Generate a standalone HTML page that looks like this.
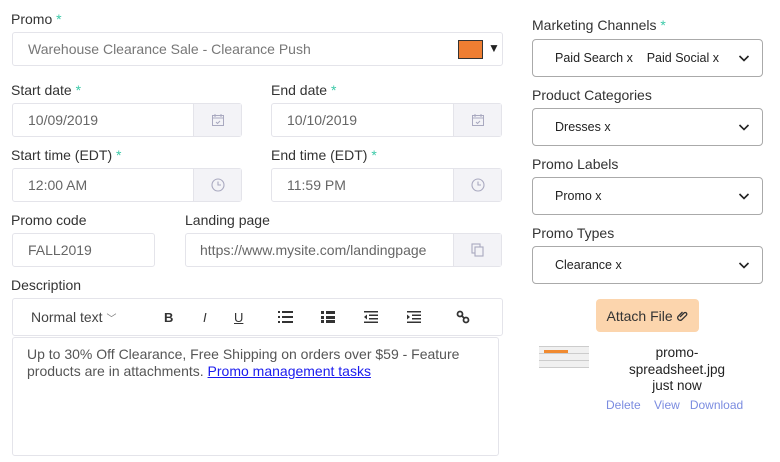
<!DOCTYPE html>
<html><head><style>
*{box-sizing:border-box;margin:0;padding:0}
body{width:780px;height:462px;background:#fff;font-family:"Liberation Sans",sans-serif;position:relative;overflow:hidden;color:#333}
.a{position:absolute}
.lbl{font-size:14px;color:#333;white-space:nowrap}
.st{color:#3cc9a8}
.in{border:1px solid #e4e4ea;border-radius:3px;background:#fff;font-size:14px;color:#666;display:flex;align-items:center;padding-left:15px}
.ad{position:absolute;right:0;top:0;bottom:0;width:48px;background:#f3f3f7;border-left:1px solid #e4e4ea;display:flex;align-items:center;justify-content:center}
.sel{border:1px solid #aaa;border-radius:4px;font-size:12.5px;color:#222;display:flex;align-items:center;padding-left:22px;white-space:nowrap}
.chev{position:absolute;right:12px;top:50%;margin-top:-6px}
.tb{font-size:14px;color:#444}
</style></head><body>
<div class="a lbl" style="left:11px;top:11px">Promo <span class="st">*</span></div>
<div class="a in" style="left:12px;top:32px;width:491px;height:34px;color:#777">Warehouse Clearance Sale - Clearance Push
<div class="a" style="left:445px;top:7px;width:25px;height:19px;background:#ef7e32;border:1px solid #333"></div>
<div class="a" style="left:475px;top:8px;font-size:12px;color:#222">▼</div></div>

<div class="a lbl" style="left:11px;top:82px">Start date <span class="st">*</span></div>
<div class="a in" style="left:12px;top:103px;width:230px;height:34px">10/09/2019<div class="ad"><svg width="14" height="14" viewBox="0 0 14 14" fill="none" stroke="#a9a9c0" stroke-width="1"><rect x="1.5" y="2.5" width="11" height="10"/><path d="M1.5 5h11M4 1v3M10 1v3M5 9l1.5 1.5L9 8"/></svg></div></div>
<div class="a lbl" style="left:271px;top:82px">End date <span class="st">*</span></div>
<div class="a in" style="left:271px;top:103px;width:231px;height:34px">10/10/2019<div class="ad"><svg width="14" height="14" viewBox="0 0 14 14" fill="none" stroke="#a9a9c0" stroke-width="1"><rect x="1.5" y="2.5" width="11" height="10"/><path d="M1.5 5h11M4 1v3M10 1v3M5 9l1.5 1.5L9 8"/></svg></div></div>

<div class="a lbl" style="left:11px;top:147px">Start time (EDT) <span class="st">*</span></div>
<div class="a in" style="left:12px;top:168px;width:230px;height:34px">12:00 AM<div class="ad"><svg width="14" height="14" viewBox="0 0 14 14" fill="none" stroke="#a9a9c0" stroke-width="1.1"><circle cx="7" cy="7" r="6"/><path d="M7 3.5V7h3"/></svg></div></div>
<div class="a lbl" style="left:271px;top:147px">End time (EDT) <span class="st">*</span></div>
<div class="a in" style="left:271px;top:168px;width:231px;height:34px">11:59 PM<div class="ad"><svg width="14" height="14" viewBox="0 0 14 14" fill="none" stroke="#a9a9c0" stroke-width="1.1"><circle cx="7" cy="7" r="6"/><path d="M7 3.5V7h3"/></svg></div></div>

<div class="a lbl" style="left:11px;top:212px">Promo code</div>
<div class="a in" style="left:12px;top:233px;width:143px;height:34px">FALL2019</div>
<div class="a lbl" style="left:185px;top:212px">Landing page</div>
<div class="a in" style="left:185px;top:233px;width:317px;height:34px;padding-left:14px">https://www.mysite.com/landingpage<div class="ad"><svg width="14" height="14" viewBox="0 0 14 14" fill="none" stroke="#a9a9c0" stroke-width="1.1"><rect x="1" y="1" width="8" height="9"/><rect x="4" y="4" width="8" height="9" fill="#f3f3f7"/></svg></div></div>

<div class="a lbl" style="left:11px;top:277px">Description</div>
<div class="a" style="left:12px;top:298px;width:491px;height:38px;border:1px solid #e4e4ea;border-radius:3px"></div>
<div class="a tb" style="left:31px;top:309px;font-size:14px">Normal text <span style="font-size:10px;color:#777">﹀</span></div>
<div class="a" style="left:164px;top:310px;font-weight:bold;font-size:13px">B</div>
<div class="a" style="left:203px;top:310px;font-style:italic;font-size:13px">I</div>
<div class="a" style="left:234px;top:310px;text-decoration:underline;font-size:13px">U</div>
<svg class="a" style="left:278px;top:311px" width="16" height="12"><g fill="#333"><rect x="0" y="0" width="2" height="2"/><rect x="0" y="5" width="2" height="2"/><rect x="0" y="10" width="2" height="2"/><rect x="4" y="0" width="11" height="2"/><rect x="4" y="5" width="11" height="2"/><rect x="4" y="10" width="11" height="2"/></g></svg>
<svg class="a" style="left:321px;top:311px" width="16" height="12"><g fill="#333"><rect x="0" y="0" width="3" height="3"/><rect x="0" y="5" width="3" height="3"/><rect x="0" y="9" width="3" height="3"/><rect x="5" y="0" width="9" height="3"/><rect x="5" y="5" width="9" height="3"/><rect x="5" y="9" width="9" height="3"/></g></svg>
<svg class="a" style="left:364px;top:311px" width="16" height="12"><g fill="#333"><rect x="0" y="0" width="14" height="1.5"/><rect x="5" y="3.5" width="9" height="1.5"/><rect x="5" y="7" width="9" height="1.5"/><rect x="0" y="10.5" width="14" height="1.5"/><path d="M0 6l3-2.5v5z"/></g></svg>
<svg class="a" style="left:407px;top:311px" width="16" height="12"><g fill="#333"><rect x="0" y="0" width="14" height="1.5"/><rect x="5" y="3.5" width="9" height="1.5"/><rect x="5" y="7" width="9" height="1.5"/><rect x="0" y="10.5" width="14" height="1.5"/><path d="M3 6l-3-2.5v5z"/></g></svg>
<svg class="a" style="left:456px;top:310px" width="14" height="14" fill="none" stroke="#333" stroke-width="1.8"><circle cx="4" cy="4" r="2.5"/><circle cx="10" cy="10" r="2.5"/><path d="M5.5 5.5l3 3"/></svg>
<div class="a" style="left:12px;top:337px;width:487px;height:119px;border:1px solid #e4e4ea;border-radius:3px;padding:8px 14px;font-size:14px;line-height:17px;color:#555">Up to 30% Off Clearance, Free Shipping on orders over $59 - Feature products are in attachments. <a style="color:#1a1aee;text-decoration:underline">Promo management tasks</a></div>

<div class="a lbl" style="left:532px;top:17px">Marketing Channels <span class="st">*</span></div>
<div class="a sel" style="left:532px;top:39px;width:231px;height:38px">Paid Search&nbsp;x&nbsp;&nbsp;&nbsp; Paid Social&nbsp;x<svg class="chev" width="12" height="12" fill="none" stroke="#222" stroke-width="1.6"><path d="M1.5 4l4.5 4.5L10.5 4"/></svg></div>
<div class="a lbl" style="left:532px;top:87px">Product Categories</div>
<div class="a sel" style="left:532px;top:108px;width:231px;height:38px">Dresses&nbsp;x<svg class="chev" width="12" height="12" fill="none" stroke="#222" stroke-width="1.6"><path d="M1.5 4l4.5 4.5L10.5 4"/></svg></div>
<div class="a lbl" style="left:532px;top:156px">Promo Labels</div>
<div class="a sel" style="left:532px;top:177px;width:231px;height:38px">Promo&nbsp;x<svg class="chev" width="12" height="12" fill="none" stroke="#222" stroke-width="1.6"><path d="M1.5 4l4.5 4.5L10.5 4"/></svg></div>
<div class="a lbl" style="left:532px;top:225px">Promo Types</div>
<div class="a sel" style="left:532px;top:246px;width:231px;height:38px">Clearance&nbsp;x<svg class="chev" width="12" height="12" fill="none" stroke="#222" stroke-width="1.6"><path d="M1.5 4l4.5 4.5L10.5 4"/></svg></div>

<div class="a" style="left:596px;top:299px;width:103px;height:33px;background:#fcd5ad;border-radius:4px;font-size:14px;color:#333;display:flex;align-items:center;justify-content:center">Attach File&nbsp;<svg width="12" height="12" viewBox="0 0 12 12" fill="none" stroke="#333" stroke-width="1.3"><path d="M3 7l4-4a1.6 1.6 0 0 1 2.3 2.3L4.5 10A2.6 2.6 0 0 1 1 6.5L5.5 2"/></svg></div>
<div class="a" style="left:539px;top:346px;width:50px;height:22px;background:repeating-linear-gradient(#ccc 0 1px,#f0f0f0 1px 7px)"><div style="margin:4px 0 0 5px;width:24px;height:3px;background:#f08a30"></div></div>
<div class="a" style="left:618px;top:344px;width:118px;text-align:center;font-size:13.5px;line-height:17px;color:#222">promo-<br>spreadsheet.jpg</div>
<div class="a" style="left:618px;top:378px;width:118px;text-align:center;font-size:13.5px;color:#222">just now</div>
<div class="a" style="left:606px;top:398px;font-size:12px;color:#7b8ce0;white-space:nowrap">Delete&nbsp;&nbsp;&nbsp; View&nbsp;&nbsp;&nbsp;Download</div>
</body></html>
